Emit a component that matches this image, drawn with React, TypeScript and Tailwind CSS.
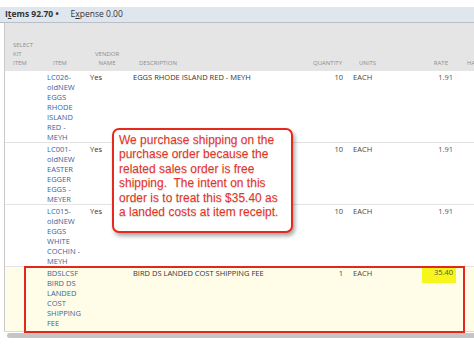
const rows = [
  {
    item: ["LC026-", "oldNEW", "EGGS", "RHODE", "ISLAND", "RED -", "MEYH"],
    vendor: "Yes",
    desc: "EGGS RHODE ISLAND RED - MEYH",
    qty: "10",
    rate: "1.91",
  },
  {
    // description sits under the callout, so it is left out
    item: ["LC001-", "oldNEW", "EASTER", "EGGER", "EGGS -", "MEYER"],
    vendor: "Yes",
    desc: "",
    qty: "10",
    rate: "1.91",
  },
  {
    item: ["LC015-", "oldNEW", "EGGS", "WHITE", "COCHIN -", "MEYH"],
    vendor: "Yes",
    desc: "",
    qty: "10",
    rate: "1.91",
  },
]

const cols = "grid grid-cols-[41px_43px_43px_170px_47px_53px_58px_1fr]"

export default function App() {
  return (
    <div className="relative w-[474px] h-[349px] overflow-hidden bg-white font-['Open_Sans',sans-serif]">
      <div className="h-[7px]" />

      {/* subtab bar */}
      <div className="flex h-[16px] items-center gap-[12px] border-b border-[#b8bfc6] bg-[#dfe6ed] px-[5px] text-[8.5px] text-[#333]">
        <span className="font-bold">
          I<span className="underline">t</span>ems 92.70 •
        </span>
        <span>
          E<span className="underline">x</span>pense 0.00
        </span>
      </div>

      <div className="ml-[4px] border-l border-[#c9c9c9]">
        {/* header */}
        <div className={`${cols} h-[48px] items-end bg-[#e5e5e5] pb-[3px] text-[6px] leading-[9px] text-[#8e8e8e]`}>
          <div className="pl-[8px]">
            SELECT
            <br />
            KIT
            <br />
            ITEM
          </div>
          <div className="pl-[7px]">ITEM</div>
          <div className="pl-[6px]">
            <div className="inline-block text-center">
              VENDOR
              <br />
              NAME
            </div>
          </div>
          <div className="pl-[7px]">DESCRIPTION</div>
          <div className="pr-[7px] text-right">QUANTITY</div>
          <div className="pl-[10px]">UNITS</div>
          <div className="pr-[12px] text-right">RATE</div>
          <div className="pl-[7px] whitespace-nowrap">HA</div>
        </div>

        {rows.map((r, i) => (
          <div
            key={i}
            className={`${cols} border-b border-[#e2e2e2] pt-[1px] text-[7.5px] leading-[10px] text-[#333]`}
          >
            <div />
            <div className="pl-[1px] text-[#3a639b]">
              {r.item.map((l) => (
                <div key={l} className="whitespace-nowrap">
                  {l}
                </div>
              ))}
            </div>
            <div className="pl-[1px]">{r.vendor}</div>
            <div className="pl-[1px] whitespace-nowrap">{r.desc}</div>
            <div className="pr-[6px] text-right text-[#444]">{r.qty}</div>
            <div className="pl-[4px] text-[#444]">EACH</div>
            <div className="pr-[7px] text-right text-[#555]">{r.rate}</div>
            <div />
          </div>
        ))}

        {/* landed cost line */}
        <div className={`${cols} bg-[#fffde8] pt-[1px] pb-[3px] text-[7.5px] leading-[10px] text-[#333]`}>
          <div />
          <div className="pl-[1px] text-[#3a639b]">
            {["BDSLCSF", "BIRD DS", "LANDED", "COST", "SHIPPING", "FEE"].map((l) => (
              <div key={l} className="whitespace-nowrap">
                {l}
              </div>
            ))}
          </div>
          <div />
          <div className="pl-[1px] whitespace-nowrap">BIRD DS LANDED COST SHIPPING FEE</div>
          <div className="pr-[6px] text-right text-[#444]">1</div>
          <div className="pl-[4px] text-[#444]">EACH</div>
          <div className="flex justify-end pr-[4px]">
            <span className="-mt-[1px] h-[16px] w-[34px] bg-[#f6f51c] pr-[3px] text-right text-[#555]">35.40</span>
          </div>
          <div />
        </div>
      </div>

      {/* horizontal scrollbar */}
      <div className="ml-[4px] border-t border-[#d8d8d8] pt-[1px]">
        <div className="ml-[3px] h-[5px] rounded-l-full bg-[#c5c5c5]" />
      </div>

      {/* highlight around landed cost line */}
      <div className="absolute left-[24px] top-[266px] h-[67px] w-[441px] border-2 border-[#e2271c]" />

      {/* callout */}
      <div className="absolute left-[112px] top-[128px] h-[105px] w-[181px] rounded-[7px] border-2 border-[#e4291d] bg-white pl-[5px] pt-[3px] font-['Liberation_Sans',Arial,sans-serif] text-[12px] leading-[14.4px] whitespace-pre text-[#e8321f] shadow-[2px_3px_4px_rgba(0,0,0,0.35)] [text-shadow:0_1px_1px_rgba(0,0,0,0.18)]">
        {"We purchase shipping on the\npurchase order because the\nrelated sales order is free\nshipping.  The intent on this\norder is to treat this $35.40 as\na landed costs at item receipt."}
      </div>
    </div>
  )
}
